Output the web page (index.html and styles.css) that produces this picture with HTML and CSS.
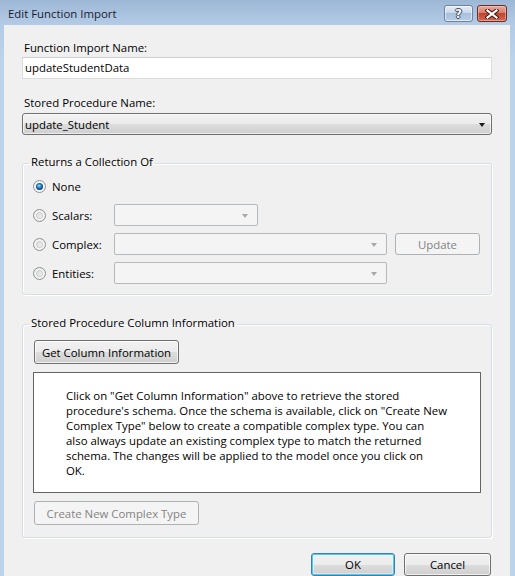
FILE: index.html
```html
<!DOCTYPE html>
<html>
<head>
<meta charset="utf-8">
<title>Edit Function Import</title>
<link rel="stylesheet" href="styles.css">
</head>
<body>
<div class="window">
  <div class="titlebar">
    <span class="title">Edit Function Import</span>
    <div class="caption-buttons">
      <span class="cap-btn help"><span class="q">?</span></span>
      <span class="cap-btn close">
        <svg width="14" height="10" viewBox="0 0 14 10">
          <path d="M2.5 1.5 L11.5 8.5 M11.5 1.5 L2.5 8.5" stroke="#4b1c16" stroke-width="4.2" stroke-linecap="square" fill="none"/>
          <path d="M2.5 1.5 L11.5 8.5 M11.5 1.5 L2.5 8.5" stroke="#ffffff" stroke-width="2.2" stroke-linecap="square" fill="none"/>
        </svg>
      </span>
    </div>
  </div>
  <div class="client">
    <div class="field-label label-first">Function Import Name:</div>
    <div class="textbox">updateStudentData</div>
    <div class="field-label label-second">Stored Procedure Name:</div>
    <div class="combo combo-main"><span>update_Student</span><span class="arrow arrow-dark"></span></div>

    <fieldset class="group group-returns">
      <legend>Returns a Collection Of</legend>
      <div class="rows">
        <div class="row">
          <span class="radio checked"><span class="dot"></span></span>
          <span class="row-label">None</span>
        </div>
        <div class="row">
          <span class="radio"></span>
          <span class="row-label">Scalars:</span>
          <span class="combo combo-disabled w-scalar"><span></span><span class="arrow arrow-light"></span></span>
        </div>
        <div class="row">
          <span class="radio"></span>
          <span class="row-label">Complex:</span>
          <span class="combo combo-disabled w-wide"><span></span><span class="arrow arrow-light"></span></span>
          <span class="btn btn-disabled btn-update">Update</span>
        </div>
        <div class="row">
          <span class="radio"></span>
          <span class="row-label">Entities:</span>
          <span class="combo combo-disabled w-wide"><span></span><span class="arrow arrow-light"></span></span>
        </div>
      </div>
    </fieldset>

    <fieldset class="group group-columns">
      <legend>Stored Procedure Column Information</legend>
      <span class="btn btn-normal btn-getcol">Get Column Information</span>
      <div class="info-box">
        Click on "Get Column Information" above to retrieve the stored<br>
        procedure's schema. Once the schema is available, click on "Create New<br>
        Complex Type" below to create a compatible complex type. You can<br>
        also always update an existing complex type to match the returned<br>
        schema. The changes will be applied to the model once you click on<br>
        OK.
      </div>
      <span class="btn btn-disabled btn-create">Create New Complex Type</span>
    </fieldset>

    <div class="dialog-buttons">
      <span class="btn btn-default btn-ok">OK</span>
      <span class="btn btn-normal btn-cancel">Cancel</span>
    </div>
  </div>
</div>
</body>
</html>
```

FILE: styles.css
```css
* {
  box-sizing: border-box;
}

html, body {
  margin: 0;
  padding: 0;
}

body {
  font-family: "Open Sans", "Noto Sans", sans-serif;
  font-size: 11.4px;
  color: #000;
  background: #b9d1ea;
}

.window {
  width: 515px;
  height: 576px;
  display: flex;
  flex-direction: column;
  overflow: hidden;
  background: linear-gradient(to bottom, #9db8d6 0px, #b3cbe6 25px, #bcd3ec 60px, #bcd3ec 100%);
}

.titlebar {
  height: 25px;
  flex: none;
  display: flex;
  align-items: flex-start;
}

.title {
  padding-left: 8px;
  padding-top: 6px;
  line-height: 16px;
  font-size: 11.4px;
  color: #1b1b33;
}

.caption-buttons {
  margin-left: auto;
  margin-right: 8px;
  margin-top: 5px;
  display: flex;
  gap: 4px;
}

.cap-btn {
  height: 17px;
  border-radius: 3px;
  display: flex;
  align-items: center;
  justify-content: center;
}

.cap-btn.help {
  width: 29px;
  border: 1px solid #6d83a0;
  background: linear-gradient(to bottom, #e6eef8 0%, #c8d8ec 45%, #a9c0dc 50%, #b8cde6 100%);
  box-shadow: inset 0 0 0 1px rgba(255, 255, 255, 0.55);
}

.cap-btn.help .q {
  font-family: "DejaVu Sans", sans-serif;
  font-weight: bold;
  font-size: 12px;
  line-height: 12px;
  color: #f4f7fb;
  text-shadow: 1px 0 0 #3d4a5c, -1px 0 0 #3d4a5c, 0 1px 0 #3d4a5c, 0 -1px 0 #3d4a5c;
}

.cap-btn.close {
  width: 30px;
  border: 1px solid #6b2a22;
  background: linear-gradient(to bottom, #e9a99b 0%, #d77e6c 45%, #c2432f 50%, #cf6a55 100%);
  box-shadow: inset 0 0 0 1px rgba(255, 220, 210, 0.45);
}

.client {
  flex: 1;
  margin: 0 5px 0 4px;
  background: #f0f0f0;
  padding: 15px 18px 0 18px;
  display: flex;
  flex-direction: column;
}

.field-label {
  line-height: 16px;
  padding-left: 2px;
}

.label-second {
  margin-top: 16px;
}

.textbox {
  margin-top: 1px;
  height: 22px;
  border: 1px solid #dcdcdc;
  border-top-color: #cfcfcf;
  background: #fff;
  line-height: 20px;
  padding-left: 2px;
}

.combo {
  height: 22px;
  display: flex;
  align-items: center;
  justify-content: space-between;
  border-radius: 3px;
  padding: 0 6px 0 2px;
}

.combo-main {
  margin-top: 2px;
  border: 1px solid #707070;
  background: linear-gradient(to bottom, #f2f2f2 0%, #ebebeb 50%, #dddddd 51%, #cfcfcf 100%);
  box-shadow: inset 0 0 0 1px rgba(255, 255, 255, 0.6);
}

.combo-disabled {
  border: 1px solid #b5b9bc;
  background: #f4f4f4;
  border-radius: 2px;
  padding-right: 9px;
}

.w-scalar {
  width: 144px;
}

.w-wide {
  width: 273px;
}

.arrow {
  width: 0;
  height: 0;
  border-left: 3.5px solid transparent;
  border-right: 3.5px solid transparent;
  margin-top: 1px;
}

.arrow-dark {
  border-top: 4px solid #1a1a1a;
}

.arrow-light {
  border-top: 4px solid #a8a8a8;
}

.group {
  margin: 0;
  border: 1px solid #d5dfe5;
  border-radius: 3px;
  box-shadow: inset 1px 1px 0 #ffffff, 1px 1px 0 #ffffff;
  padding: 3px 10px 10px 10px;
  min-width: 0;
}

.group legend {
  padding: 0 2px 3px 2px;
  margin-left: -4px;
  line-height: 15px;
}

.group-returns {
  margin-top: 19px;
}

.rows {
  display: grid;
  grid-template-rows: repeat(4, 22px);
  row-gap: 7px;
}

.row {
  display: flex;
  align-items: center;
  height: 22px;
}

.radio {
  width: 13px;
  height: 13px;
  border-radius: 50%;
  border: 1px solid #8f9294;
  background: linear-gradient(135deg, #cfcfcf 0%, #e6e6e6 50%, #fafafa 100%);
  box-shadow: inset 0 0 0 2px #f4f4f4, inset 0 0 0 3px #d0d0d0;
  margin-right: 6px;
  display: flex;
  align-items: center;
  justify-content: center;
  flex: none;
}

.radio.checked {
  background: #f4f4f4;
  box-shadow: inset 0 0 0 1px #f8f8f8;
}

.radio .dot {
  width: 7px;
  height: 7px;
  border-radius: 50%;
  background: radial-gradient(circle at 45% 40%, #a9e0ff 0px, #3d9ad8 1.5px, #1a5d99 3px, #0f3d6d 4px);
}

.row-label {
  width: 62px;
  flex: none;
}

.btn {
  display: inline-flex;
  align-items: center;
  justify-content: center;
  border-radius: 3px;
  height: 24px;
  flex: none;
}

.btn-normal {
  border: 1px solid #707070;
  background: linear-gradient(to bottom, #f2f2f2 0%, #ebebeb 50%, #dddddd 51%, #cfcfcf 100%);
  box-shadow: inset 0 0 0 1px rgba(255, 255, 255, 0.7);
}

.btn-disabled {
  border: 1px solid #adb2b5;
  background: #f4f4f4;
  color: #838383;
}

.btn-default {
  border: 1px solid #3c7fb1;
  background: linear-gradient(to bottom, #f2f2f2 0%, #ebebeb 50%, #dddddd 51%, #cfcfcf 100%);
  box-shadow: inset 0 0 0 1px #48cbf7, inset 0 0 0 2px rgba(255, 255, 255, 0.4);
}

.btn-update {
  margin-left: 8px;
  width: 85px;
  height: 22px;
}

.btn-getcol {
  width: 145px;
  margin-left: 1px;
}

.info-box {
  margin-top: 8px;
  height: 121px;
  border: 1px solid #646464;
  background: #fff;
  padding: 15px 0 0 32px;
  line-height: 15px;
  white-space: nowrap;
}

.btn-create {
  width: 165px;
  margin-top: 8px;
  margin-left: 1px;
}

.group-columns {
  margin-top: 20px;
  padding-top: 7px;
  padding-bottom: 12px;
  display: flex;
  flex-direction: column;
  align-items: flex-start;
}

.group-columns .info-box {
  align-self: stretch;
}

.dialog-buttons {
  margin-top: 15px;
  display: flex;
  justify-content: flex-end;
  gap: 9px;
  padding-right: 1px;
}

.btn-ok {
  width: 84px;
  height: 23px;
}

.btn-cancel {
  width: 87px;
  height: 23px;
}
```
